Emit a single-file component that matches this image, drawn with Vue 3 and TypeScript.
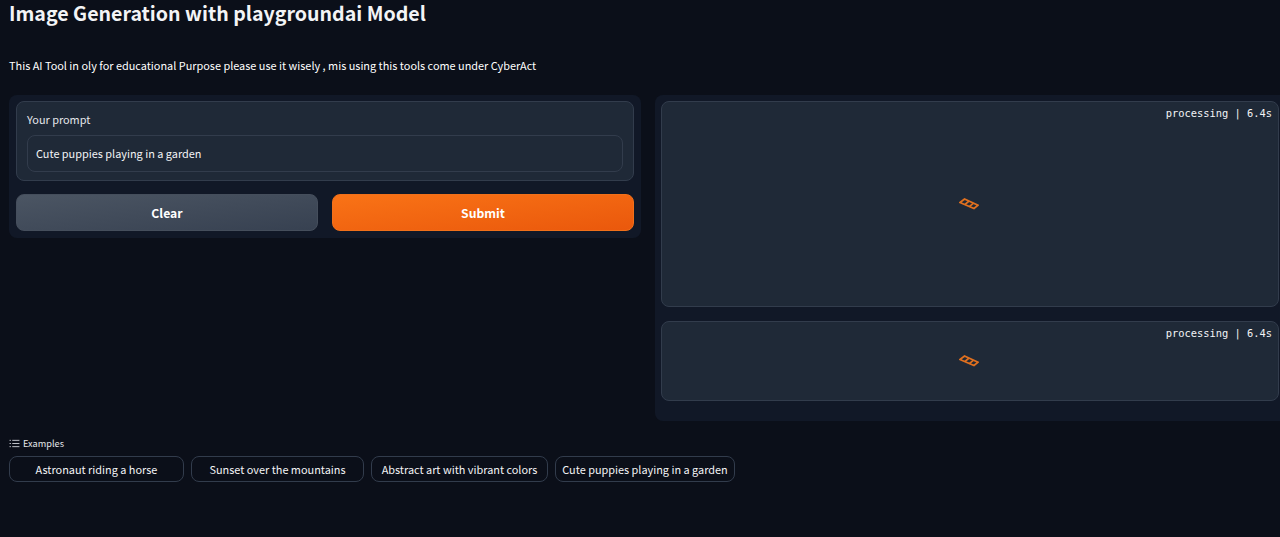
<script setup lang="ts">
const examples: { text: string; width: number }[] = [
  { text: 'Astronaut riding a horse', width: 175 },
  { text: 'Sunset over the mountains', width: 173 },
  { text: 'Abstract art with vibrant colors', width: 177 },
  { text: 'Cute puppies playing in a garden', width: 180 },
]
const outputs = [{ cls: 'out-a' }, { cls: 'out-b' }]
</script>

<template>
  <div class="page">
    <h1 class="title">Image Generation with playgroundai Model</h1>
    <p class="note">This AI Tool in oly for educational Purpose please use it wisely , mis using this tools come under CyberAct</p>
    <div class="columns">
      <section class="panel left">
        <div class="field">
          <span class="label">Your prompt</span>
          <div class="input">Cute puppies playing in a garden</div>
        </div>
        <div class="actions">
          <button class="btn clear">Clear</button>
          <button class="btn submit">Submit</button>
        </div>
      </section>
      <section class="panel right">
        <div v-for="o in outputs" :key="o.cls" class="output" :class="o.cls">
          <span class="status">processing | 6.4s</span>
          <svg class="loader" viewBox="0 0 20 14" width="20" height="14">
            <g fill="none" stroke="#e0701f" stroke-width="1.7">
              <path d="M1 5.5 L5.5 2 L19 8.2 L15 11.5 Z" />
              <path d="M10 4 L5.8 7.6" />
              <path d="M14.5 6.1 L10.4 9.6" />
            </g>
          </svg>
        </div>
      </section>
    </div>
    <div class="examples-head">
      <svg viewBox="0 0 12 10" width="11" height="9">
        <g stroke="#d1d5db" stroke-width="1">
          <path d="M3.5 1.5H11.5M3.5 5H11.5M3.5 8.5H11.5" />
          <path d="M0.5 1.5H2M0.5 5H2M0.5 8.5H2" />
        </g>
      </svg>
      <span>Examples</span>
    </div>
    <div class="examples">
      <button v-for="e in examples" :key="e.text" class="chip" :style="{ width: e.width + 'px' }">{{ e.text }}</button>
    </div>
  </div>
</template>

<style>
html, body { background: #0b0f19; }
</style>

<style scoped>
.page {
  width: 1280px;
  height: 537px;
  box-sizing: border-box;
  padding: 0 0 0 9px;
  background: #0b0f19;
  color: #f3f4f6;
  font-family: "Noto Sans CJK SC", "Noto Sans", sans-serif;
  overflow: hidden;
}
.title { margin: 0; font-size: 19.6px; line-height: 26px; font-weight: 600; }
.note { margin: 30px 0 0; font-size: 10.9px; line-height: 18px; color: #fff; }
.columns { display: flex; gap: 14px; margin-top: 21px; align-items: flex-start; width: 1290px; }
.panel { background: #111827; border-radius: 8px; box-sizing: border-box; padding: 6px 7px; }
.left { width: 632px; height: 143px; }
.right { width: 632px; height: 326px; flex: none; padding-left: 6px; }
.field {
  height: 80px;
  box-sizing: border-box;
  background: #1f2937;
  border: 1px solid #323c4c;
  border-radius: 8px;
  padding: 8px 10px;
}
.label { display: block; font-size: 10.9px; line-height: 18px; color: #e5e7eb; }
.input {
  margin-top: 7px;
  height: 37px;
  box-sizing: border-box;
  border: 1px solid #323c4c;
  border-radius: 8px;
  padding: 0 8px;
  font-size: 10.9px;
  line-height: 34px;
}
.actions { display: flex; gap: 14px; margin-top: 13px; }
.btn {
  flex: 1;
  height: 37px;
  border-radius: 8px;
  font-family: inherit;
  font-size: 12.2px;
  font-weight: 600;
  color: #fff;
}
.clear { background: linear-gradient(to bottom right, #4b5563, #374151); border: 1px solid #454e5c; }
.submit { background: linear-gradient(to bottom right, #f97316, #ea580c); border: 1px solid #f1701a; }
.output {
  position: relative;
  display: flex;
  align-items: center;
  justify-content: center;
  background: #1f2937;
  border: 1px solid #323c4c;
  border-radius: 8px;
  box-sizing: border-box;
  width: 618px;
}
.out-a { height: 206px; }
.out-b { height: 80px; margin-top: 14px; }
.loader { position: relative; left: -1px; }
.status {
  position: absolute;
  top: 3px;
  right: 6px;
  font-family: "DejaVu Sans Mono", "Liberation Mono", monospace;
  font-size: 10.4px;
  line-height: 16px;
  color: #f3f4f6;
}
.examples-head { display: flex; align-items: center; gap: 3px; margin-top: 15px; font-size: 9.2px; line-height: 14px; color: #e5e7eb; }
.examples { display: flex; gap: 7px; margin-top: 6px; }
.chip {
  height: 26px;
  box-sizing: border-box;
  padding: 0;
  background: #0b0f19;
  border: 1px solid #323c4c;
  border-radius: 8px;
  color: #f3f4f6;
  font-family: inherit;
  font-size: 10.9px;
  white-space: nowrap;
}
</style>
